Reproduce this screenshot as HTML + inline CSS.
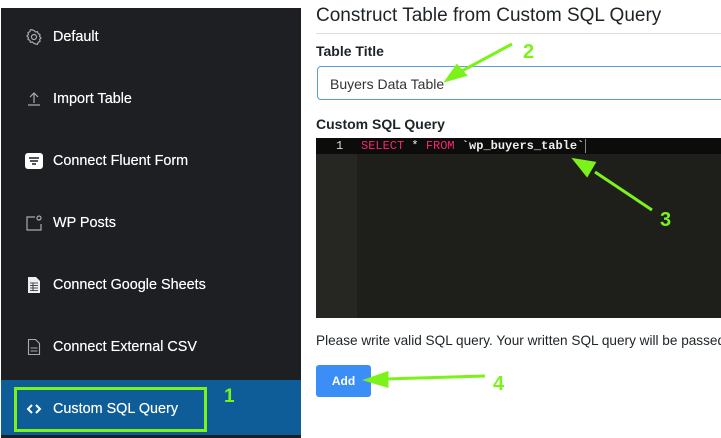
<!DOCTYPE html>
<html><head><style>
*{margin:0;padding:0;box-sizing:border-box}
body{width:721px;height:438px;overflow:hidden;background:#fff;font-family:"Liberation Sans",sans-serif;position:relative}
.sb{position:absolute;left:1px;top:8px;width:300px;height:430px;background:#1d1f23}
.it{position:absolute;left:25px;color:#fff;font-size:14.4px;display:flex;align-items:center;height:20px;text-shadow:0 0 .4px #fff}
.it .ic{width:18px;margin-right:10px;display:flex;justify-content:center}
.act{position:absolute;left:1px;top:380px;width:300px;height:55px;background:#0f5d98}
.t{position:absolute;color:#1d2327}
.ed{position:absolute;left:316px;top:138px;width:405px;height:180px;background:#1e1e1b}
.gut{position:absolute;left:0;top:0;width:41px;height:180px;background:#262622}
.code{position:absolute;font-family:"Liberation Mono",monospace;font-size:12px;top:1px}
</style></head><body>
<div class="sb"></div>
<div class="act"></div>
<div class="it" style="top:27px"><span class="ic"><svg width="16" height="16" viewBox="0 0 16 16" fill="none" stroke="#aaa" stroke-width="1.2"><circle cx="8" cy="8" r="2.5"/><path d="M8 1.5l1.5 1.5 2-.3.7 2 1.8.9-.4 2 1.4 1.4-1.4 1.4.4 2-1.8.9-.7 2-2-.3L8 14.5 6.5 13l-2 .3-.7-2L2 10.4l.4-2L1 7l1.4-1.4-.4-2 1.8-.9.7-2 2 .3z"/></svg></span>Default</div>
<div class="it" style="top:89px"><span class="ic"><svg width="16" height="16" viewBox="0 0 16 16" fill="none" stroke="#aaa" stroke-width="1.2"><path d="M8 12V2M4 6l4-4 4 4M2 14h12"/></svg></span>Import Table</div>
<div class="it" style="top:151px"><span class="ic"><svg width="18" height="16" viewBox="0 0 18 16"><rect x="0" y="0" width="18" height="16" rx="3" fill="#fff"/><path d="M4 5h10M5 8h8M7 11h4" stroke="#1d1f23" stroke-width="1.6"/></svg></span>Connect Fluent Form</div>
<div class="it" style="top:213px"><span class="ic"><svg width="16" height="16" viewBox="0 0 16 16" fill="none" stroke="#aaa" stroke-width="1.2"><path d="M9 2H1v13h14V9"/><circle cx="13" cy="3" r="2"/></svg></span>WP Posts</div>
<div class="it" style="top:275px"><span class="ic"><svg width="14" height="16" viewBox="0 0 14 16"><path d="M1 0h8l4 4v12H1z" fill="#eee"/><path d="M3 6h8M3 8.5h8M3 11h8M3 13.5h8M6 6v8" stroke="#1d1f23" stroke-width=".8"/></svg></span>Connect Google Sheets</div>
<div class="it" style="top:337px"><span class="ic"><svg width="14" height="16" viewBox="0 0 14 16" fill="none" stroke="#aaa" stroke-width="1.1"><path d="M1.5.5h7l4 4v11h-11z"/><path d="M3.5 9h7M3.5 12h7"/></svg></span>Connect External CSV</div>
<div class="it" style="top:399px"><span class="ic"><svg width="16" height="12" viewBox="0 0 16 12" fill="none" stroke="#fff" stroke-width="2"><path d="M6 2L2 6l4 4M10 2l4 4-4 4"/></svg></span>Custom SQL Query</div>
<div style="position:absolute;left:14px;top:387px;width:193px;height:45px;border:3px solid #7bf31a"></div>
<div style="position:absolute;left:224px;top:386px;color:#7bf31a;font-size:19px;font-weight:bold">1</div>

<div class="t" style="left:316px;top:5px;font-size:19px;white-space:nowrap">Construct Table from Custom SQL Query</div>
<div style="position:absolute;left:316px;top:33px;width:405px;height:1px;background:#ddd"></div>
<div class="t" style="left:316px;top:43px;font-size:14px;font-weight:bold">Table Title</div>
<div style="position:absolute;left:317px;top:66px;width:410px;height:34px;border:1px solid #5b9dd9;border-radius:4px"></div>
<div class="t" style="left:330px;top:76px;font-size:14px;color:#333">Buyers Data Table</div>
<div class="t" style="left:316px;top:116px;font-size:14px;font-weight:bold">Custom SQL Query</div>
<div class="ed"><div class="gut"></div>
<div style="position:absolute;left:0;top:0;width:405px;height:16px;background:#0c0c0a"></div>
<div class="code" style="left:20px;color:#ddd">1</div>
<div class="code" style="left:45px;color:#f92672">SELECT <span style="color:#eee">*</span> FROM <span style="color:#eee;font-weight:bold">`wp_buyers_table`</span></div>
<div style="position:absolute;left:269px;top:1px;width:1px;height:14px;background:#888"></div>
</div>
<div class="t" style="left:316px;top:333px;font-size:13.6px;white-space:nowrap">Please write valid SQL query. Your written SQL query will be passed</div>
<div style="position:absolute;left:316px;top:365px;width:55px;height:32px;background:#3a8ef6;border-radius:3px;color:#fff;font-size:12px;font-weight:bold;text-align:center;line-height:32px">Add</div>
<svg style="position:absolute;left:0;top:0" width="721" height="438"><g stroke="#7bf31a" stroke-width="3" fill="#7bf31a"><path d="M512 44L460 72"/><path d="M447 80l10-14 8 9z"/><path d="M652 210L595 172"/><path d="M575 160l19 3-7 12z"/><path d="M485 376L385 379"/><path d="M367 380l20-7 0 13z"/></g>
<g fill="#7bf31a" font-family="Liberation Sans" font-size="20" font-weight="bold"><text x="523" y="58">2</text><text x="660" y="226">3</text><text x="493" y="390">4</text></g></svg>
</body></html>
